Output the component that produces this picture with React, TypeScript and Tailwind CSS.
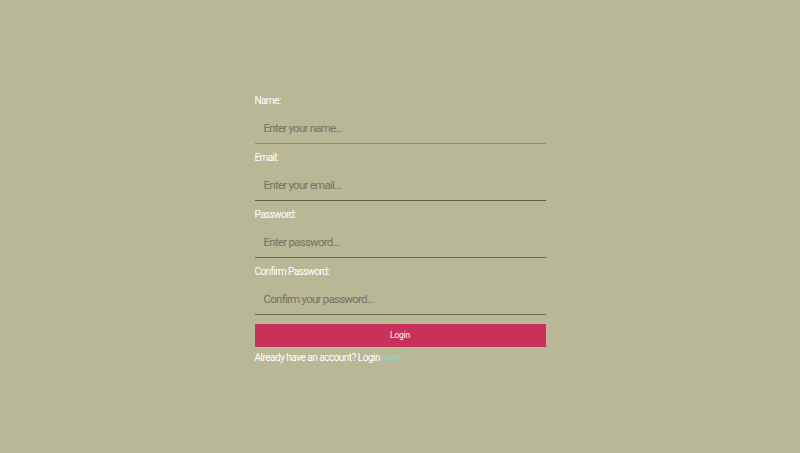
import React from "react";

const fields = [
  { label: "Name:", placeholder: "Enter your name...", type: "text", line: "border-[#8d8c74]" },
  { label: "Email:", placeholder: "Enter your email...", type: "email", line: "border-[#5f5e4e]" },
  { label: "Password:", placeholder: "Enter password...", type: "password", line: "border-[#6a6957]" },
  { label: "Confirm Password:", placeholder: "Confirm your password...", type: "password", line: "border-[#6a6957]" },
];

export default function App() {
  return (
    <div
      className="flex h-[453px] w-full justify-center bg-[#b8b796] pt-[94px]"
      style={{ fontFamily: "Roboto, 'Liberation Sans', Arial, sans-serif" }}
    >
      <form className="flex w-[291px] flex-col" onSubmit={(e) => e.preventDefault()}>
        {fields.map((f) => (
          <div key={f.label} className="mb-[7px] flex flex-col">
            <label className="h-[13px] text-[10px] leading-[13px] tracking-[-0.6px] text-white">{f.label}</label>
            <input
              type={f.type}
              placeholder={f.placeholder}
              className={`mt-[6px] h-[31px] border-b ${f.line} bg-transparent px-[9px] text-[11.5px] tracking-[-0.75px] text-[#55543f] placeholder:text-[#75745f] outline-none`}
            />
          </div>
        ))}
        <button
          type="submit"
          className="mt-[2px] h-[23px] w-full bg-[#c8325a] text-[8.5px] tracking-[-0.2px] text-white"
        >
          Login
        </button>
        <p className="mt-[4px] text-[10px] leading-[13px] tracking-[-0.5px] text-white">
          Already have an account? Login <a href="#" className="text-[#86d6c6]">here</a>
        </p>
      </form>
    </div>
  );
}
